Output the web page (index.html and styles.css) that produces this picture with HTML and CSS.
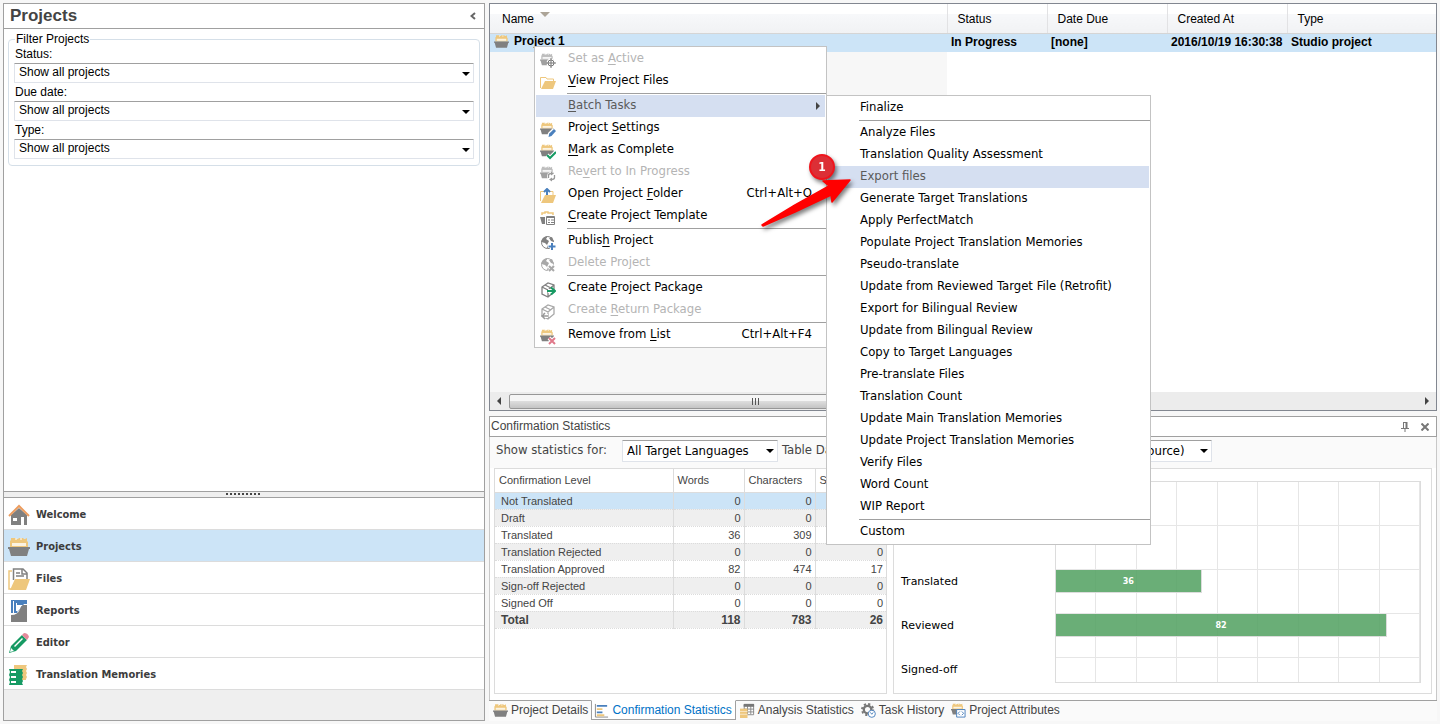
FILE: index.html
```html
<!DOCTYPE html>
<html lang="en">
<head>
    <meta charset="UTF-8">
    <meta name="viewport" content="width=device-width, initial-scale=1.0">
    <title>Projects</title>
    <link rel="stylesheet" href="styles.css">
</head>
<body>
    <!-- Icon set -->
    <svg class="icon-defs" aria-hidden="true">
        <symbol id="i-project" viewBox="0 0 22 20">
            <path d="M2 10V4l1-1V1h5l1 1h1l1-1h4l1 1h1l2-1v3l1 1v5z" fill="#eec77d"/>
            <path d="M4 6h14v3H4z" fill="#fbf3e2"/>
            <path d="M8 1v2M13 1v2" stroke="#fff"/>
            <path d="M0 10h22v2h-1l-2 7H3l-2-7H0z" fill="#808080"/>
        </symbol>
        <symbol id="i-project-off" viewBox="0 0 22 20">
            <path d="M2 10V4l1-1V1h5l1 1h1l1-1h4l1 1h1l2-1v3l1 1v5z" fill="#bdbdbd"/>
            <path d="M4 6h14v3H4z" fill="#f4f4f4"/>
            <path d="M8 1v2M13 1v2" stroke="#fff"/>
            <path d="M0 10h22v2h-1l-2 7H3l-2-7H0z" fill="#a0a0a0"/>
        </symbol>
        <symbol id="i-active" viewBox="0 0 16 16">
            <use href="#i-project-off" width="14" height="13"/>
            <circle cx="11" cy="10" r="4.500" fill="#fff"/>
            <circle cx="11" cy="10" r="3" fill="none" stroke="#777"/>
            <path d="M11 5v10M6 10h10" stroke="#777"/>
        </symbol>
        <symbol id="i-folder" viewBox="0 0 16 16">
            <path d="M.5 13V2.500H6L7 4h6.500v3" fill="none" stroke="#eec77d"/>
            <path d="m1 14 4-8h11l-3 8z" fill="#eec77d"/>
        </symbol>
        <symbol id="i-settings" viewBox="0 0 16 16">
            <use href="#i-project" width="14" height="13"/>
            <path d="m7 16 1-5 5-5 3 3-5 6z" fill="#fff"/>
            <path d="m8.500 15 .8-3.500L14 7l2 2-4.500 5z" fill="#4a80bd"/>
        </symbol>
        <symbol id="i-complete" viewBox="0 0 16 16">
            <use href="#i-project" width="14" height="13"/>
            <path d="m7 11 3 3 6-6" fill="none" stroke="#fff" stroke-width="4"/>
            <path d="m7 11 3 3 6-6" fill="none" stroke="#169a63" stroke-width="2"/>
        </symbol>
        <symbol id="i-revert" viewBox="0 0 16 16">
            <use href="#i-project-off" width="14" height="13"/>
            <circle cx="11.500" cy="10.500" r="4.500" fill="#fff"/>
            <path d="M8.500 12V9.500q0-2 3-2M14.500 9v2.500q0 2-3 2" fill="none" stroke="#999" stroke-width="1.300"/>
            <path d="m11 5.500 3 2-3 2zM12 15.500l-3-2 3-2z" fill="#999"/>
        </symbol>
        <symbol id="i-open" viewBox="0 0 16 16">
            <path d="M.5 13V3.500H4M10 3.500h3V7" fill="none" stroke="#eec77d"/>
            <path d="m1 15 4-8h11l-3 8z" fill="#eec77d"/>
            <path d="M7 7V1M4 4l3-3 3 3" fill="none" stroke="#4a80bd" stroke-width="2"/>
        </symbol>
        <symbol id="i-template" viewBox="0 0 16 16">
            <path d="M2 5V3h3V2h3v1h5v2" fill="none" stroke="#eec77d" stroke-width="1.500"/>
            <path d="M0 7h5v7H2z" fill="#808080"/>
            <path d="M6.500 6.500h8v8h-8z" fill="#fff" stroke="#808080"/>
            <path d="M6 7.500h9M8 10h2M11 10h3M8 12.500h2M11 12.500h3" stroke="#808080"/>
        </symbol>
        <symbol id="i-globe" viewBox="0 0 16 16">
            <circle cx="7.500" cy="7.500" r="6" fill="#fff" stroke="currentColor"/>
            <path d="M3 3 8 1 6 4l3 2-2 4-2-2-4-1zM9 3l3-1 2 5-3-1zM8 10l4-1-3 5-2-1z" fill="currentColor"/>
        </symbol>
        <symbol id="i-publish" viewBox="0 0 16 16">
            <use href="#i-globe" color="#808080" width="16" height="16"/>
            <path d="M12 7v8M8 11h8" stroke="#fff" stroke-width="4"/>
            <path d="M12 8v7M8.500 11.500h7" stroke="#4a80bd" stroke-width="2"/>
        </symbol>
        <symbol id="i-delete" viewBox="0 0 16 16">
            <use href="#i-globe" color="#a8a8a8" width="16" height="16"/>
            <path d="m9 9 6 6M15 9l-6 6" stroke="#fff" stroke-width="4"/>
            <path d="m9 9 5 5M14 9l-5 5" stroke="#a8a8a8" stroke-width="2"/>
        </symbol>
        <symbol id="i-box" viewBox="0 0 16 16">
            <path d="M2 5 8 1l6 2v7l-6 5-6-3zM2 5l6 3 6-5M8 8v7M5 3l6 3" fill="#fff" stroke="currentColor" stroke-width="1.300"/>
        </symbol>
        <symbol id="i-package" viewBox="0 0 16 16">
            <use href="#i-box" color="#808080" width="16" height="16"/>
            <path d="M8 9h6" stroke="#fff" stroke-width="4"/>
            <path d="M7 9h7M11 5.500 15 9l-4 3.500" fill="none" stroke="#169a63" stroke-width="2"/>
        </symbol>
        <symbol id="i-return" viewBox="0 0 16 16">
            <use href="#i-box" color="#a8a8a8" width="16" height="16"/>
            <path d="M2 12h6" stroke="#fff" stroke-width="4"/>
            <path d="M1.500 12H8M5 9l-3 3 3 3" fill="none" stroke="#999" stroke-width="1.500"/>
        </symbol>
        <symbol id="i-remove" viewBox="0 0 16 16">
            <use href="#i-project" width="14" height="13"/>
            <path d="m9 9 6 6M15 9l-6 6" stroke="#fff" stroke-width="4"/>
            <path d="m9 9 6 6M15 9l-6 6" stroke="#e0798a" stroke-width="2"/>
        </symbol>
        <symbol id="i-home" viewBox="0 0 22 22">
            <path d="M3 11 11 4l8 7v10h-3v-8h-3v8H3z" fill="#808080"/>
            <path d="M5 14h4v3H5z" fill="#fff"/>
            <path d="m1 12 10-10 10 10" fill="none" stroke="#ec9c5e" stroke-width="2"/>
        </symbol>
        <symbol id="i-files" viewBox="0 0 22 22">
            <path d="M4 3H1v18h2" fill="none" stroke="#eec77d" stroke-width="1.500"/>
            <path d="M5.500 12V1H15l4 4v7" fill="#fff" stroke="#808080" stroke-width="1.500"/>
            <path d="M14 1v5h5M8 5h4M8 8h8" fill="none" stroke="#808080" stroke-width="1.500"/>
            <path d="M2 22 7 11h15l-4 11z" fill="#eec77d"/>
        </symbol>
        <symbol id="i-reports" viewBox="0 0 22 22">
            <path d="M3 0h16v4h-3l-7 9H3z" fill="#4a80bd"/>
            <path d="M5.500 1v12M8.500 3v8" stroke="#fff"/>
            <path d="M9 5h6q-2 1-3 4l-3 3z" fill="#fff"/>
            <path d="M3 22v-7q7 0 9-6 1-3 3-4h4v17z" fill="#808080"/>
        </symbol>
        <symbol id="i-editor" viewBox="0 0 22 22">
            <path d="M1 21 3 14 14 3l5 5L8 19z" fill="#169a63"/>
            <path d="m2 20 1-4 3 3zM6 14l8-8 1 1-8 8z" fill="#fff"/>
            <path d="m14 3 2-2q4 0 5 4l-2 3z" fill="#e58a9b"/>
        </symbol>
        <symbol id="i-memory" viewBox="0 0 22 22">
            <path d="M6 1h13l-1 2 1 2-1 2 1 2-1 2 1 2-1 2v1H6z" fill="#eec77d"/>
            <path d="M1 5h14l-1 2 1 2-1 2 1 2-1 2 1 2-1 2 1 2H1l1-3-1-2 1-3-1-2 1-3z" fill="#169a63"/>
            <path d="M3 8h5M3 13h5M3 18h5" stroke="#fff" stroke-width="2"/>
        </symbol>
        <symbol id="i-confirm" viewBox="0 0 16 16">
            <path d="M1.500 1v14H15" fill="none" stroke="#888"/>
            <path d="M3 3h11M3 10h6" stroke="#4a80bd" stroke-width="2"/>
            <path d="M3 6.500h6M3 13h8" stroke="#eec77d" stroke-width="2"/>
        </symbol>
        <symbol id="i-analysis" viewBox="0 0 16 16">
            <path d="M4.500 1.500h10v11h-10z" fill="#fff" stroke="#888"/>
            <path d="M4 3h11M4 6.500h11M4 9.500h11M8 2v10M11.500 2v10" stroke="#888"/>
            <path d="M4 1h11v3H4z" fill="#777"/>
            <path d="M0 6h8v10H0z" fill="#eec77d"/>
            <path d="M0 9h8M0 12h8" stroke="#fff" stroke-width=".6"/>
        </symbol>
        <symbol id="i-history" viewBox="0 0 16 16">
            <circle cx="7" cy="7" r="4" fill="none" stroke="#777" stroke-width="2.500"/>
            <circle cx="7" cy="7" r="6" fill="none" stroke="#777" stroke-width="2" stroke-dasharray="2.350 2.350"/>
            <circle cx="11.500" cy="11.500" r="3.800" fill="#fff" stroke="#4a80bd"/>
            <path d="M10 10l1.500 2L13 10" fill="none" stroke="#4a80bd"/>
        </symbol>
        <symbol id="i-attributes" viewBox="0 0 16 16">
            <use href="#i-project" width="14" height="13"/>
            <path d="M6 7h9v8H6z" fill="#fff" stroke="#4a80bd"/>
            <path d="m9.500 9-2 2 2 2M11.500 9l2 2-2 2" fill="none" stroke="#4a80bd"/>
        </symbol>
    </svg>

    <div class="app">
        <aside class="sidebar">
            <header class="sidebar-header">
                <h1>Projects</h1>
                <button type="button" class="collapse" aria-label="Collapse">
                    <svg width="6" height="8" viewBox="0 0 6 8"><path d="M5 1 1.500 4 5 7" fill="none" stroke="#666" stroke-width="2"/></svg>
                </button>
            </header>

            <fieldset class="filters">
                <legend>Filter Projects</legend>
                <label for="status">Status:</label>
                <div class="select">
                    <select id="status"><option>Show all projects</option></select>
                </div>
                <label for="dueDate">Due date:</label>
                <div class="select">
                    <select id="dueDate"><option>Show all projects</option></select>
                </div>
                <label for="type">Type:</label>
                <div class="select">
                    <select id="type"><option>Show all projects</option></select>
                </div>
            </fieldset>

            <div class="splitter"></div>

            <nav class="nav">
                <a href="#"><svg><use href="#i-home"/></svg>Welcome</a>
                <a href="#" class="current"><svg><use href="#i-project"/></svg>Projects</a>
                <a href="#"><svg><use href="#i-files"/></svg>Files</a>
                <a href="#"><svg><use href="#i-reports"/></svg>Reports</a>
                <a href="#"><svg><use href="#i-editor"/></svg>Editor</a>
                <a href="#"><svg><use href="#i-memory"/></svg>Translation Memories</a>
            </nav>
            <div class="nav-footer"></div>
        </aside>

        <main class="workspace">
            <section class="project-list">
                <table class="projects">
                    <colgroup>
                        <col class="sorted">
                        <col class="col-status">
                        <col class="col-due">
                        <col class="col-created">
                        <col class="col-type">
                    </colgroup>
                    <thead>
                        <tr>
                            <th>Name<span class="sort-arrow"></span></th>
                            <th>Status</th>
                            <th>Date Due</th>
                            <th>Created At</th>
                            <th>Type</th>
                        </tr>
                    </thead>
                    <tbody>
                        <tr class="selected">
                            <td><svg class="icon"><use href="#i-project"/></svg>Project 1</td>
                            <td>In Progress</td>
                            <td>[none]</td>
                            <td>2016/10/19 16:30:38</td>
                            <td>Studio project</td>
                        </tr>
                        <tr class="filler"><td></td><td></td><td></td><td></td><td></td></tr>
                    </tbody>
                </table>
                <div class="scrollbar">
                    <span class="arrow-left"></span>
                    <span class="thumb"><i></i><i></i><i></i></span>
                    <span class="arrow-right"></span>
                </div>
            </section>

            <section class="details">
                <header class="details-header">
                    <h2>Confirmation Statistics</h2>
                    <button type="button" aria-label="Pin">
                        <svg width="8" height="10" viewBox="0 0 8 10"><path d="M2.500 0v6M2 .5h4M0 6.500h8M4 7v3" stroke="#777"/><path d="M5.500 0v6" stroke="#777" stroke-width="2"/></svg>
                    </button>
                    <button type="button" aria-label="Close">
                        <svg width="8" height="8" viewBox="0 0 8 8"><path d="m.5.5 7 7M7.500.5l-7 7" stroke="#777" stroke-width="2"/></svg>
                    </button>
                </header>

                <div class="toolbar">
                    <label for="languages">Show statistics for:</label>
                    <div class="select languages">
                        <select id="languages"><option>All Target Languages</option></select>
                    </div>
                    <label for="chartData">Table Data:</label>
                    <div class="select chart-data">
                        <select id="chartData"><option>Words (source)</option></select>
                    </div>
                </div>

                <div class="stats">
                    <div class="stats-box">
                        <table class="levels">
                            <thead>
                                <tr><th>Confirmation Level</th><th>Words</th><th>Characters</th><th>Segments</th></tr>
                            </thead>
                            <tbody>
                                <tr class="selected"><td>Not Translated</td><td>0</td><td>0</td><td></td></tr>
                                <tr><td>Draft</td><td>0</td><td>0</td><td></td></tr>
                                <tr><td>Translated</td><td>36</td><td>309</td><td></td></tr>
                                <tr><td>Translation Rejected</td><td>0</td><td>0</td><td>0</td></tr>
                                <tr><td>Translation Approved</td><td>82</td><td>474</td><td>17</td></tr>
                                <tr><td>Sign-off Rejected</td><td>0</td><td>0</td><td>0</td></tr>
                                <tr><td>Signed Off</td><td>0</td><td>0</td><td>0</td></tr>
                                <tr class="total"><td>Total</td><td>118</td><td>783</td><td>26</td></tr>
                            </tbody>
                        </table>
                    </div>

                    <div class="chart">
                        <div class="chart-labels">
                            <span></span>
                            <span></span>
                            <span>Translated</span>
                            <span>Reviewed</span>
                            <span>Signed-off</span>
                        </div>
                        <div class="plot">
                            <div class="row"></div>
                            <div class="row"></div>
                            <div class="row"><div class="bar" style="width: 40%">36</div></div>
                            <div class="row"><div class="bar" style="width: 91%">82</div></div>
                            <div class="row"></div>
                        </div>
                    </div>
                </div>
            </section>

            <div class="tabs" role="tablist">
                <button type="button" role="tab"><svg class="icon"><use href="#i-project"/></svg>Project Details</button>
                <button type="button" role="tab" class="active" aria-selected="true"><svg class="icon"><use href="#i-confirm"/></svg>Confirmation Statistics</button>
                <button type="button" role="tab"><svg class="icon"><use href="#i-analysis"/></svg>Analysis Statistics</button>
                <button type="button" role="tab"><svg class="icon"><use href="#i-history"/></svg>Task History</button>
                <button type="button" role="tab"><svg class="icon"><use href="#i-attributes"/></svg>Project Attributes</button>
            </div>

            <!-- Context menu -->
            <ul class="menu context-menu">
                <li><button type="button" disabled><svg><use href="#i-active"/></svg><span>Set as <u>A</u>ctive</span></button></li>
                <li><button type="button"><svg><use href="#i-folder"/></svg><span><u>V</u>iew Project Files</span></button></li>
                <li class="separator"></li>
                <li class="has-submenu">
                    <button type="button" class="hover"><span><u>B</u>atch Tasks</span><i class="submenu-arrow"></i></button>
                    <ul class="menu submenu">
                        <li><button type="button">Finalize</button></li>
                        <li class="separator"></li>
                        <li><button type="button">Analyze Files</button></li>
                        <li><button type="button">Translation Quality Assessment</button></li>
                        <li><button type="button" class="hover">Export files</button></li>
                        <li><button type="button">Generate Target Translations</button></li>
                        <li><button type="button">Apply PerfectMatch</button></li>
                        <li><button type="button">Populate Project Translation Memories</button></li>
                        <li><button type="button">Pseudo-translate</button></li>
                        <li><button type="button">Update from Reviewed Target File (Retrofit)</button></li>
                        <li><button type="button">Export for Bilingual Review</button></li>
                        <li><button type="button">Update from Bilingual Review</button></li>
                        <li><button type="button">Copy to Target Languages</button></li>
                        <li><button type="button">Pre-translate Files</button></li>
                        <li><button type="button">Translation Count</button></li>
                        <li><button type="button">Update Main Translation Memories</button></li>
                        <li><button type="button">Update Project Translation Memories</button></li>
                        <li><button type="button">Verify Files</button></li>
                        <li><button type="button">Word Count</button></li>
                        <li><button type="button">WIP Report</button></li>
                        <li class="separator"></li>
                        <li><button type="button">Custom</button></li>
                    </ul>
                </li>
                <li><button type="button"><svg><use href="#i-settings"/></svg><span>Project <u>S</u>ettings</span></button></li>
                <li><button type="button"><svg><use href="#i-complete"/></svg><span><u>M</u>ark as Complete</span></button></li>
                <li><button type="button" disabled><svg><use href="#i-revert"/></svg><span>Re<u>v</u>ert to In Progress</span></button></li>
                <li><button type="button"><svg><use href="#i-open"/></svg><span>Open Project <u>F</u>older</span><kbd>Ctrl+Alt+O</kbd></button></li>
                <li><button type="button"><svg><use href="#i-template"/></svg><span><u>C</u>reate Project Template</span></button></li>
                <li class="separator"></li>
                <li><button type="button"><svg><use href="#i-publish"/></svg><span>Publis<u>h</u> Project</span></button></li>
                <li><button type="button" disabled><svg><use href="#i-delete"/></svg><span>Delete Project</span></button></li>
                <li class="separator"></li>
                <li><button type="button"><svg><use href="#i-package"/></svg><span>Create <u>P</u>roject Package</span></button></li>
                <li><button type="button" disabled><svg><use href="#i-return"/></svg><span>Create <u>R</u>eturn Package</span></button></li>
                <li class="separator"></li>
                <li><button type="button"><svg><use href="#i-remove"/></svg><span>Remove from <u>L</u>ist</span><kbd>Ctrl+Alt+F4</kbd></button></li>
            </ul>

            <!-- Step marker -->
            <svg class="callout" width="110" height="100" viewBox="0 0 110 100">
                <path d="M7 75 40 55 74 36 68 31 95 30 77 52 76 45 40 62 8 76z" fill="#f00" stroke="#f00" stroke-width="1.500" stroke-linejoin="round"/>
                <circle cx="67" cy="17" r="12" fill="#dc2f36" stroke="#f0141c" stroke-width="2"/>
                <text x="67" y="21" text-anchor="middle">1</text>
            </svg>
        </main>
    </div>
</body>
</html>
```
FILE: styles.css
```css
* {
    box-sizing: border-box;
}
body {
    margin: 0;
    background: #f7f7f7;
    color: #000;
    font-family: "Liberation Sans", Arial, sans-serif;
    font-size: 12px;
}
button, select {
    font: inherit;
    color: inherit;
}
button {
    padding: 0;
    border: none;
    background: none;
}
h1, h2, ul {
    margin: 0;
    padding: 0;
}
table {
    border-collapse: collapse;
    table-layout: fixed;
    width: 100%;
}
.icon-defs {
    position: absolute;
    width: 0;
    height: 0;
}
.icon {
    width: 15px;
    height: 15px;
}
.app {
    display: grid;
    grid-template-columns: 482px 1fr;
    gap: 4px;
    height: 100vh;
    padding: 3px;
}

/* Sidebar */
.sidebar {
    display: flex;
    flex-direction: column;
    background: #fff;
    border: 1px solid #a0a0a0;
}
.sidebar-header {
    display: flex;
    align-items: center;
    justify-content: space-between;
    height: 25px;
    padding: 0 8px 0 6px;
    border-bottom: 1px solid #a0a0a0;
}
.sidebar-header h1 {
    color: #444;
    font-size: 17px;
}
.collapse {
    display: flex;
}
.filters {
    margin: 3px 4px 0;
    padding: 0 5px 5px;
    border: 1px solid #d5dfe8;
    border-radius: 4px;
}
.filters legend {
    margin-left: 1px;
    padding: 0 1px;
    line-height: 14px;
}
.filters label {
    display: block;
    padding-left: 1px;
    line-height: 16px;
}
.filters .select {
    margin: 1px 0;
}
.select {
    position: relative;
}
.select select {
    display: block;
    width: 100%;
    height: 20px;
    padding: 0 20px 2px 4px;
    appearance: none;
    background: #fff;
    border: 1px solid #dfe3ea;
    border-top-color: #a0a0a0;
    border-radius: 1px;
}
.select::after {
    content: "";
    position: absolute;
    top: 9px;
    right: 4px;
    border: 4px solid transparent;
    border-top-color: #000;
    border-bottom: none;
    pointer-events: none;
}
.splitter {
    height: 7px;
    margin-top: auto;
    border: solid #a0a0a0;
    border-width: 1px 0;
    background: #efefef;
}
.splitter::before {
    content: "";
    display: block;
    width: 36px;
    height: 2px;
    margin: 1px auto;
    background: repeating-linear-gradient(to right, #444 0 2px, transparent 2px 4px);
}
.nav a {
    display: flex;
    align-items: center;
    gap: 6px;
    height: 32px;
    padding: 2px 0 0 4px;
    border-bottom: 1px solid #dcdcdc;
    color: #3c3c3c;
    font: bold 11px "DejaVu Sans Condensed", "DejaVu Sans", sans-serif;
    text-decoration: none;
}
.nav a.current {
    background: #cce4f7;
}
.nav svg {
    width: 22px;
    height: 22px;
}
.nav-footer {
    height: 30px;
    background: #efefef;
}

/* Project list */
.workspace {
    position: relative;
    display: flex;
    flex-direction: column;
    min-width: 0;
}
.project-list {
    display: flex;
    flex-direction: column;
    flex: 1;
    margin-bottom: 5px;
    background: #fff;
    border: 1px solid #828790;
}
.projects {
    flex: 1;
    height: 387px;
}
.sorted {
    background: #f7f7f7;
}
.col-status {
    width: 100px;
}
.col-due {
    width: 120px;
}
.col-created {
    width: 120px;
}
.col-type {
    width: 149px;
}
.projects th {
    height: 29px;
    padding: 2px 0 0 10px;
    border-right: 1px solid #e2e2e4;
    border-bottom: 1px solid #d5d5d5;
    background: linear-gradient(#fff 34%, #f7f8fa 36%, #f1f2f4);
    font-weight: normal;
    text-align: left;
}
.projects th:first-child {
    padding-left: 12px;
}
.projects th:last-child {
    border-right: none;
}
.projects td {
    padding: 0 0 2px 4px;
    font-weight: bold;
    white-space: nowrap;
}
.projects .selected {
    height: 19px;
    background: #cce4f7;
}
.projects .icon {
    margin-right: 5px;
    vertical-align: middle;
}
.sort-arrow {
    display: inline-block;
    margin: 0 0 6px 6px;
    border: 5px solid transparent;
    border-top-color: #aca497;
    border-bottom: none;
}
.scrollbar {
    display: flex;
    align-items: center;
    justify-content: space-between;
    height: 18px;
    padding: 0 7px;
    background: #ececec;
}
.arrow-left, .arrow-right {
    border: 4px solid transparent;
}
.arrow-left {
    border-right-color: #444;
    border-left: none;
}
.arrow-right {
    border-left-color: #444;
    border-right: none;
}
.thumb {
    display: flex;
    align-items: center;
    justify-content: center;
    gap: 2px;
    width: 492px;
    height: 15px;
    margin: 0 auto 0 8px;
    border: 1px solid #979797;
    border-radius: 2px;
    background: linear-gradient(#f5f5f5 45%, #dcdcdc 50%, #c4c4c4);
}
.thumb i {
    width: 1px;
    height: 7px;
    background: #555;
}

/* Statistics */
.details {
    background: #fff;
    border: solid #c8c8c8;
    border-width: 0 1px;
}
.details-header {
    display: flex;
    align-items: center;
    gap: 12px;
    height: 21px;
    margin: 0 -1px;
    padding: 0 7px 0 1px;
    border: 1px solid #a0a0a0;
    color: #444;
}
.details-header h2 {
    flex: 1;
    padding-bottom: 2px;
    font-size: 12px;
    font-weight: normal;
}
.details-header button {
    display: flex;
}
.toolbar {
    display: flex;
    align-items: center;
    height: 31px;
    padding: 0 6px;
    background: #fafafa;
    color: #444;
    font-family: "DejaVu Sans Condensed", "DejaVu Sans", sans-serif;
    font-size: 13px;
}
.toolbar label {
    padding-bottom: 6px;
}
.toolbar label:first-child {
    width: 126px;
}
.toolbar .select {
    margin: 0 4px 4px 0;
}
.toolbar .select select {
    height: 22px;
    padding-bottom: 0;
    color: #000;
}
.toolbar .languages {
    width: 156px;
}
.toolbar .chart-data {
    width: 364px;
}
.toolbar .chart-data select {
    padding-right: 26px;
    text-align: right;
    text-align-last: right;
}
.stats {
    display: flex;
    gap: 6px;
    padding: 0 4px 6px 4px;
}
.stats-box {
    width: 393px;
    border: 1px solid #dcdcdc;
    color: #444;
    font-size: 11px;
}
.levels th {
    width: 71px;
    height: 23px;
    padding: 0 4px;
    border-right: 1px solid #dcdcdc;
    border-bottom: 1px solid #dcdcdc;
    font-weight: normal;
    text-align: left;
}
.levels th:first-child {
    width: auto;
}
.levels td {
    height: 17px;
    padding: 0 3px;
    border-right: 1px solid #dcdcdc;
    border-bottom: 1px dotted #dcdcdc;
    text-align: right;
}
.levels td:first-child {
    padding-left: 6px;
    text-align: left;
}
.levels th:last-child, .levels td:last-child {
    border-right: none;
}
.levels tbody tr:nth-child(even) td {
    background: #efefef;
}
.levels tbody .selected td {
    background: #cce4f7;
}
.levels .total td {
    font-size: 12px;
    font-weight: bold;
}
.chart {
    display: flex;
    flex: 1;
    padding: 12px 10px 10px 7px;
    border: 1px solid #dcdcdc;
    font-family: "DejaVu Sans", sans-serif;
    font-size: 11px;
}
.chart-labels {
    width: 154px;
}
.chart-labels span {
    display: flex;
    height: 44px;
    padding-top: 6px;
}
.chart-labels span:last-child {
    height: 24px;
}
.plot {
    flex: 1;
    border: 1px solid #dcdcdc;
    background: repeating-linear-gradient(to right, transparent 0 calc(100% / 9 - 1px), #e6e6e6 calc(100% / 9 - 1px) calc(100% / 9));
}
.row {
    height: 44px;
    border-bottom: 1px solid #e6e6e6;
}
.row:last-child {
    height: 24px;
    border-bottom: none;
}
.bar {
    display: flex;
    align-items: center;
    justify-content: center;
    height: 23px;
    border-right: 1px solid #dcdcdc;
    border-bottom: 1px solid #dcdcdc;
    background: rgba(80, 160, 95, 0.85);
    color: #fff;
    font: bold 9px "DejaVu Sans Condensed", "DejaVu Sans", sans-serif;
}

/* Tabs */
.tabs {
    display: flex;
    height: 21px;
    padding-bottom: 1px;
    border-top: 1px solid #a0a0a0;
    background: #fafafa;
    color: #444;
}
.tabs button {
    display: flex;
    align-items: center;
    gap: 3px;
    padding: 0 3px 1px 4px;
}
.tabs .active {
    margin-top: -1px;
    padding: 0 3px 0 2px;
    border: 1px solid #a0a0a0;
    border-top-color: #fff;
    background: #fff;
    color: #0072c6;
}

/* Menus */
.menu {
    position: absolute;
    padding: 1px;
    border: 1px solid #c3c3c3;
    background: #fff;
    font-family: "DejaVu Sans Condensed", "DejaVu Sans", sans-serif;
    font-size: 13px;
    list-style: none;
}
.context-menu {
    top: 43px;
    left: 45px;
    width: 293px;
}
.submenu {
    top: 0;
    left: 290px;
    width: 325px;
    z-index: 1;
}
.has-submenu {
    position: relative;
}
.menu button {
    display: flex;
    align-items: center;
    position: relative;
    width: 100%;
    height: 22px;
    padding: 0 13px 4px 32px;
    text-align: left;
    white-space: nowrap;
}
.menu button:disabled {
    color: #b4b4b4;
}
.menu button.hover {
    background: #d5dff1;
    color: #5a5a5a;
}
.menu svg {
    position: absolute;
    top: 5px;
    left: 4px;
    width: 16px;
    height: 16px;
}
.menu kbd {
    margin-left: auto;
    font: inherit;
}
.menu u {
    text-underline-offset: 2px;
}
.submenu-arrow {
    margin: 4px -8px 0 auto;
    border: 4px solid transparent;
    border-left-color: #444;
    border-right: none;
}
.separator {
    height: 3px;
    margin: 0 -1px 0 31px;
    padding-top: 1px;
}
.separator::before {
    content: "";
    display: block;
    border-top: 1px solid #a0a0a0;
}

/* Step marker */
.callout {
    position: absolute;
    top: 147px;
    left: 266px;
    z-index: 2;
    filter: drop-shadow(2px 3px 2px rgba(0, 0, 0, 0.5));
    pointer-events: none;
}
.callout text {
    fill: #fff;
    font: bold 12px "DejaVu Sans Condensed", "DejaVu Sans", sans-serif;
}
```
